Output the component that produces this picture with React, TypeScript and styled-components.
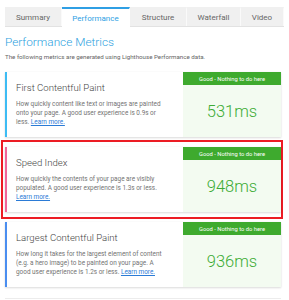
import React from "react"
import styled, { createGlobalStyle } from "styled-components"

const GlobalStyle = createGlobalStyle`
  html, body {
    margin: 0;
    padding: 0;
    background: #ffffff;
    overflow: hidden;
  }
  body {
    font-family: Roboto, "Liberation Sans", Arial, sans-serif;
    color: #555;
  }
`

const Page = styled.div`
  width: 289px;
  height: 300px;
  padding: 7px 0 0 5px;
  box-sizing: border-box;
`

const TabBar = styled.div`
  display: flex;
  width: 279px;
  height: 20px;
  background: #f0f0f0;
  border-bottom: 1px solid #e2e2e2;
  box-sizing: border-box;
`

const Tab = styled.div<{ $active?: boolean; $w: number }>`
  display: flex;
  align-items: center;
  justify-content: center;
  width: ${(p) => p.$w}px;
  height: ${(p) => (p.$active ? "20px" : "19px")};
  box-sizing: border-box;
  font-size: 8px;
  color: ${(p) => (p.$active ? "#2f9fe4" : "#666")};
  background: ${(p) => (p.$active ? "#ffffff" : "transparent")};
  border-top: 2px solid ${(p) => (p.$active ? "#2f9fe4" : "transparent")};
  border-right: 1px solid ${(p) => (p.$active ? "transparent" : "#fafafa")};
`

const Title = styled.h1`
  margin: 7px 0 0;
  font-size: 11.8px;
  line-height: 16px;
  font-weight: 300;
  color: #2e9fe0;
`

const Subtitle = styled.p`
  margin: 3px 0 0;
  font-size: 6.2px;
  line-height: 9px;
  color: #666;
`

const CardList = styled.div`
  display: flex;
  flex-direction: column;
  gap: 10px;
  margin-top: 10px;
  width: 276px;
`

const Highlight = styled.div`
  margin: -7px -2px -7px -4px;
  padding: 5px 0 5px 2px;
  border: 2px solid #ec1c24;
`

const Card = styled.div<{ $accent: string }>`
  display: flex;
  height: 65px;
  background: #ffffff;
  border-left: 2px solid ${(p) => p.$accent};
  box-shadow: 0 1px 2px rgba(0, 0, 0, 0.14), 0 0 1px rgba(0, 0, 0, 0.06);
`

const CardBody = styled.div`
  flex: 1;
  padding: 10px 8px 0 9px;
`

const CardTitle = styled.h2`
  margin: 0;
  font-size: 9.6px;
  line-height: 12px;
  font-weight: 300;
  color: #444;
`

const CardText = styled.p`
  margin: 6px 0 0;
  font-size: 6.4px;
  line-height: 9px;
  color: #737373;
`

const LearnMore = styled.a`
  color: #2b7bd6;
  text-decoration: underline;
`

const Grade = styled.div`
  display: flex;
  flex-direction: column;
  width: 98px;
  background: #f3fbf1;
`

const GradeHead = styled.div`
  height: 13px;
  display: flex;
  align-items: center;
  justify-content: center;
  background: #3eaa2e;
  color: #ffffff;
  font-size: 5.8px;
`

const GradeValue = styled.div`
  flex: 1;
  display: flex;
  align-items: center;
  justify-content: center;
  font-size: 16.5px;
  font-weight: 300;
  color: #3cac35;
`

const NextEdge = styled.div`
  height: 6px;
  margin-top: 1px;
  border-top: 1px solid #ececec;
`

type Metric = {
  title: string
  lines: string[]
  linkInline: boolean
  value: string
  accent: string
  highlighted?: boolean
}

const tabs = [
  { label: "Summary", w: 57 },
  { label: "Performance", w: 68, active: true },
  { label: "Structure", w: 57 },
  { label: "Waterfall", w: 54 },
  { label: "Video", w: 43 },
]

const metrics: Metric[] = [
  {
    title: "First Contentful Paint",
    lines: [
      "How quickly content like text or images are painted",
      "onto your page. A good user experience is 0.9s or",
      "less.",
    ],
    linkInline: true,
    value: "531ms",
    accent: "#3dbcf4",
  },
  {
    title: "Speed Index",
    lines: [
      "How quickly the contents of your page are visibly",
      "populated. A good user experience is 1.3s or less.",
    ],
    linkInline: false,
    value: "948ms",
    accent: "#f0679a",
    highlighted: true,
  },
  {
    title: "Largest Contentful Paint",
    lines: [
      "How long it takes for the largest element of content",
      "(e.g. a hero image) to be painted on your page. A",
      "good user experience is 1.2s or less.",
    ],
    linkInline: true,
    value: "936ms",
    accent: "#4a8ef0",
  },
]

const MetricCard: React.FC<{ m: Metric }> = ({ m }) => (
  <Card $accent={m.accent}>
    <CardBody>
      <CardTitle>{m.title}</CardTitle>
      <CardText>
        {m.lines.map((line, i) => (
          <React.Fragment key={i}>
            {line}
            {i < m.lines.length - 1 && <br />}
          </React.Fragment>
        ))}
        {m.linkInline ? " " : <br />}
        <LearnMore href="#">Learn more.</LearnMore>
      </CardText>
    </CardBody>
    <Grade>
      <GradeHead>Good - Nothing to do here</GradeHead>
      <GradeValue>{m.value}</GradeValue>
    </Grade>
  </Card>
)

const App: React.FC = () => {
  return (
    <>
      <GlobalStyle />
      <Page>
        <TabBar>
          {tabs.map((t) => (
            <Tab key={t.label} $w={t.w} $active={t.active}>
              {t.label}
            </Tab>
          ))}
        </TabBar>

        <Title>Performance Metrics</Title>
        <Subtitle>The following metrics are generated using Lighthouse Performance data.</Subtitle>

        <CardList>
          {metrics.map((m) =>
            m.highlighted ? (
              <Highlight key={m.title}>
                <MetricCard m={m} />
              </Highlight>
            ) : (
              <MetricCard key={m.title} m={m} />
            )
          )}
          <NextEdge />
        </CardList>
      </Page>
    </>
  )
}

export default App
